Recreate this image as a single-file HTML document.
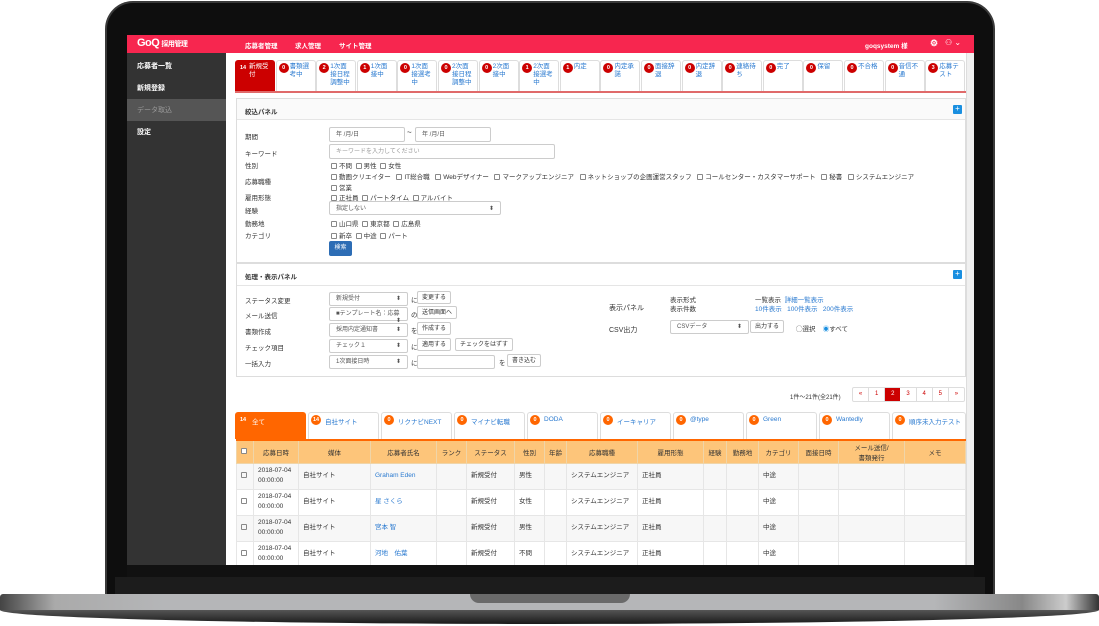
<!DOCTYPE html>
<html><head><meta charset="utf-8"><style>
*{margin:0;padding:0;box-sizing:border-box}
body{width:1099px;height:626px;background:#fff;position:relative;overflow:hidden;font-family:"Liberation Sans","Noto Sans CJK JP",sans-serif;font-size:7px;color:#333}
.a{position:absolute}
.lid{left:105px;top:1px;width:890px;height:600px;background:#0e0e0e;border-radius:28px 28px 0 0;border:2px solid #3a3a3a;border-bottom:none}
.scr{left:127px;top:35px;width:847px;height:530px;background:#fff;overflow:hidden}
.hdr{left:0;top:0;width:847px;height:18px;background:#f7264f;color:#fff;font-weight:bold}
.side{left:0;top:18px;width:99px;height:512px;background:#333;color:#fff;font-weight:bold}
.side div{position:absolute;left:10px;font-size:7px}
.tab{top:25px;height:32px;width:40px;border:1px solid #ddd;border-bottom:none;border-radius:3px 3px 0 0;background:#fff;color:#2a7ad0;font-size:6.5px;line-height:8px;padding:2px 2px 0 13px}
.tab b{position:absolute;left:2px;top:2px;width:10px;height:10px;border-radius:50%;background:#c00;color:#fff;font-size:5.5px;text-align:center;line-height:10px}
.inp{border:1px solid #ccc;border-radius:2px;background:#fff;height:12px;font-size:6px;color:#555;padding:2px 6px;line-height:7px}
.btn{border:1px solid #ccc;border-radius:2px;background:#fff;height:13px;font-size:6px;padding:3px 4px;line-height:7px;color:#333}
.lbl{font-size:6.5px}
.cb{display:inline-block;width:6px;height:6px;border:1px solid #888;border-radius:1px;margin:0 2px 0 0;vertical-align:-1px}
.opt{font-size:6.5px;white-space:nowrap}
.stab{top:377px;height:27px;width:71px;border:1px solid #ddd;border-bottom:none;border-radius:3px 3px 0 0;background:#fff;color:#2a7ad0;font-size:6.5px;padding:3px 0 0 16px}
.stab b{position:absolute;left:2px;top:2px;width:10px;height:10px;border-radius:50%;background:#f60;color:#fff;font-size:5.5px;text-align:center;line-height:10px}
table{position:absolute;left:109px;top:404px;width:730px;border-collapse:collapse;font-size:6.5px}
th{background:#fdc57a;height:23px;font-weight:normal;border:1px solid #f0d5a8;border-top:2px solid #f60;text-align:center}
td{height:26px;border:1px solid #e6e6e6;padding:0 4px;line-height:10px}
tr:nth-child(even) td{background:#f7f7f7}
.lk{color:#2a7ad0}
</style></head><body>
<div class="a lid"></div>
<div class="a" style="left:127px;top:565px;width:847px;height:12px;background:#111"></div>
<div class="a" style="left:115px;top:577px;width:870px;height:17px;background:#1c1c1c"></div>
<div class="a" style="left:0;top:594px;width:1099px;height:16px;background:linear-gradient(90deg,#444 0%,#aaa 5%,#b5b6b8 15%,#b5b6b8 85%,#888 93%,#ccc 97%,#333 100%);border-radius:3px 3px 0 0"></div>
<div class="a" style="left:470px;top:594px;width:160px;height:9px;background:#6a6a6a;border-radius:0 0 10px 10px"></div>
<div class="a" style="left:0;top:610px;width:1099px;height:14px;background:linear-gradient(#555,#1a1a1a);border-radius:0 0 50% 50%/0 0 100% 100%"></div>

<div class="a scr">
 <div class="a hdr">
  <div class="a" style="left:10px;top:2px;font-size:11px;font-weight:bold;letter-spacing:-0.5px">GoQ<span style="font-size:7px;margin-left:2px">採用管理</span></div>
  <div class="a" style="left:118px;top:5px;font-size:6.5px">応募者管理</div>
  <div class="a" style="left:168px;top:5px;font-size:6.5px">求人管理</div>
  <div class="a" style="left:212px;top:5px;font-size:6.5px">サイト管理</div>
  <div class="a" style="left:738px;top:5px;font-size:6.5px">goqsystem 様</div>
  <div class="a" style="left:803px;top:3px;font-size:9px">⚙</div>
  <div class="a" style="left:818px;top:3px;font-size:8px;font-weight:normal">⚇ ⌄</div>
 </div>
 <div class="a side">
  <div style="top:8px">応募者一覧</div>
  <div style="top:30px">新規登録</div>
  <div style="left:0;top:46px;width:99px;height:22px;background:#555"></div>
  <div style="top:52px;color:#999;font-weight:normal">データ取込</div>
  <div style="top:74px">設定</div>
 </div>
 <div class="a" style="left:839px;top:18px;width:8px;height:512px;background:#f0f0f0;border-left:1px solid #ddd"></div>

 <!-- status tabs -->
 <div class="a tab" style="left:108px;background:#c00;color:#fff;height:33px;border-color:#c00"><b style="background:none">14</b>新規受付</div>
 <div class="a tab" style="left:148.6px"><b>0</b>書類選考中</div>
 <div class="a tab" style="left:189.2px"><b>2</b>1次面接日程調整中</div>
 <div class="a tab" style="left:229.8px"><b>1</b>1次面接中</div>
 <div class="a tab" style="left:270.4px"><b>0</b>1次面接選考中</div>
 <div class="a tab" style="left:311px"><b>0</b>2次面接日程調整中</div>
 <div class="a tab" style="left:351.6px"><b>0</b>2次面接中</div>
 <div class="a tab" style="left:392.2px"><b>1</b>2次面接選考中</div>
 <div class="a tab" style="left:432.8px"><b>1</b>内定</div>
 <div class="a tab" style="left:473.4px"><b>0</b>内定承諾</div>
 <div class="a tab" style="left:514px"><b>0</b>面接辞退</div>
 <div class="a tab" style="left:554.6px"><b>0</b>内定辞退</div>
 <div class="a tab" style="left:595.2px"><b>0</b>連絡待ち</div>
 <div class="a tab" style="left:635.8px"><b>0</b>完了</div>
 <div class="a tab" style="left:676.4px"><b>0</b>保留</div>
 <div class="a tab" style="left:717px"><b>0</b>不合格</div>
 <div class="a tab" style="left:757.6px"><b>0</b>音信不通</div>
 <div class="a tab" style="left:798.2px"><b>3</b>応募テスト</div>
 <div class="a" style="left:108px;top:56px;width:731px;height:2px;background:#e06a6a"></div>

 <!-- panel1 -->
 <div class="a" style="left:109px;top:63px;width:730px;height:165px;border:1px solid #ddd">
  <div class="a" style="left:0;top:0;width:728px;height:21px;border-bottom:1px solid #e5e5e5;background:#fafafa"></div>
  <div class="a lbl" style="left:8px;top:7px;font-weight:bold">絞込パネル</div>
  <div class="a" style="left:716px;top:6px;width:9px;height:9px;background:#1a8fe0;border-radius:1px;color:#fff;font-size:8px;line-height:8px;text-align:center">+</div>
  <div class="a lbl" style="left:8px;top:32px">期間</div>
  <div class="a inp" style="left:92px;top:28px;width:76px;height:15px;padding-top:4px">年 /月/日</div>
  <div class="a" style="left:170px;top:29px;font-size:8px">~</div>
  <div class="a inp" style="left:178px;top:28px;width:76px;height:15px;padding-top:4px">年 /月/日</div>
  <div class="a lbl" style="left:8px;top:49px">キーワード</div>
  <div class="a inp" style="left:92px;top:45px;width:226px;height:15px;padding-top:4px;color:#999">キーワードを入力してください</div>
  <div class="a lbl" style="left:8px;top:61px">性別</div>
  <div class="a opt" style="left:94px;top:61px"><i class="cb"></i>不問 &nbsp;<i class="cb"></i>男性 &nbsp;<i class="cb"></i>女性</div>
  <div class="a lbl" style="left:8px;top:77px">応募職種</div>
  <div class="a opt" style="left:94px;top:72px;word-spacing:1px"><i class="cb"></i>動画クリエイター &nbsp;<i class="cb"></i>IT総合職 &nbsp;<i class="cb"></i>Webデザイナー &nbsp;<i class="cb"></i>マークアップエンジニア &nbsp;<i class="cb"></i>ネットショップの企画運営スタッフ &nbsp;<i class="cb"></i>コールセンター・カスタマーサポート &nbsp;<i class="cb"></i>秘書 &nbsp;<i class="cb"></i>システムエンジニア</div>
  <div class="a opt" style="left:94px;top:83px"><i class="cb"></i>営業</div>
  <div class="a lbl" style="left:8px;top:93px">雇用形態</div>
  <div class="a opt" style="left:94px;top:93px"><i class="cb"></i>正社員 &nbsp;<i class="cb"></i>パートタイム &nbsp;<i class="cb"></i>アルバイト</div>
  <div class="a lbl" style="left:8px;top:106px">経験</div>
  <div class="a inp" style="left:92px;top:102px;width:172px;height:14px;padding-top:4px">指定しない<span style="float:right">⬍</span></div>
  <div class="a lbl" style="left:8px;top:119px">勤務地</div>
  <div class="a opt" style="left:94px;top:119px"><i class="cb"></i>山口県 &nbsp;<i class="cb"></i>東京都 &nbsp;<i class="cb"></i>広島県</div>
  <div class="a lbl" style="left:8px;top:131px">カテゴリ</div>
  <div class="a opt" style="left:94px;top:131px"><i class="cb"></i>新卒 &nbsp;<i class="cb"></i>中途 &nbsp;<i class="cb"></i>パート</div>
  <div class="a" style="left:92px;top:142px;width:23px;height:15px;background:#2d6db5;border-radius:2px;color:#fff;font-size:6px;text-align:center;line-height:15px">検索</div>
 </div>

 <!-- panel2 -->
 <div class="a" style="left:109px;top:228px;width:730px;height:114px;border:1px solid #ddd">
  <div class="a" style="left:0;top:0;width:728px;height:22px;border-bottom:1px solid #e5e5e5"></div>
  <div class="a lbl" style="left:8px;top:7px;font-weight:bold">処理・表示パネル</div>
  <div class="a" style="left:716px;top:6px;width:9px;height:9px;background:#1a8fe0;border-radius:1px;color:#fff;font-size:8px;line-height:8px;text-align:center">+</div>
  <div class="a lbl" style="left:8px;top:31px">ステータス変更</div>
  <div class="a inp" style="left:92px;top:28px;width:79px;height:14px;padding-top:3px">新規受付<span style="float:right">⬍</span></div>
  <div class="a lbl" style="left:174px;top:30px">に</div>
  <div class="a btn" style="left:180px;top:27px">変更する</div>
  <div class="a lbl" style="left:8px;top:46px">メール送信</div>
  <div class="a inp" style="left:92px;top:43px;width:79px;height:14px;padding-top:3px">■テンプレート名：応募<span style="float:right">⬍</span></div>
  <div class="a lbl" style="left:174px;top:45px">の</div>
  <div class="a btn" style="left:180px;top:42px">送信画面へ</div>
  <div class="a lbl" style="left:8px;top:62px">書類作成</div>
  <div class="a inp" style="left:92px;top:59px;width:79px;height:14px;padding-top:3px">採用内定通知書<span style="float:right">⬍</span></div>
  <div class="a lbl" style="left:174px;top:61px">を</div>
  <div class="a btn" style="left:180px;top:58px">作成する</div>
  <div class="a lbl" style="left:8px;top:78px">チェック項目</div>
  <div class="a inp" style="left:92px;top:75px;width:79px;height:14px;padding-top:3px">チェック１<span style="float:right">⬍</span></div>
  <div class="a lbl" style="left:174px;top:77px">に</div>
  <div class="a btn" style="left:180px;top:74px">適用する</div>
  <div class="a btn" style="left:218px;top:74px">チェックをはずす</div>
  <div class="a lbl" style="left:8px;top:94px">一括入力</div>
  <div class="a inp" style="left:92px;top:91px;width:79px;height:14px;padding-top:3px">1次面接日時<span style="float:right">⬍</span></div>
  <div class="a lbl" style="left:174px;top:93px">に</div>
  <div class="a inp" style="left:180px;top:91px;width:78px;height:14px"></div>
  <div class="a lbl" style="left:262px;top:93px">を</div>
  <div class="a btn" style="left:270px;top:90px">書き込む</div>
  <div class="a lbl" style="left:372px;top:39px;font-size:7px">表示パネル</div>
  <div class="a lbl" style="left:433px;top:30px">表示形式</div>
  <div class="a lbl" style="left:433px;top:39px">表示件数</div>
  <div class="a lbl" style="left:518px;top:30px">一覧表示 &nbsp;<span class="lk">詳細一覧表示</span></div>
  <div class="a lbl lk" style="left:518px;top:39px">10件表示 &nbsp;&nbsp;100件表示 &nbsp;&nbsp;200件表示</div>
  <div class="a lbl" style="left:372px;top:61px;font-size:7px">CSV出力</div>
  <div class="a inp" style="left:433px;top:56px;width:79px;height:14px;padding-top:3px">CSVデータ<span style="float:right">⬍</span></div>
  <div class="a btn" style="left:513px;top:56px">出力する</div>
  <div class="a lbl" style="left:559px;top:59px">◯選択 &nbsp;&nbsp;&nbsp;<span style="color:#1a8fe0">◉</span>すべて</div>
 </div>

 <!-- pagination -->
 <div class="a lbl" style="left:663px;top:357px;font-size:6px">1件〜21件(全21件)</div>
 <div class="a" style="left:725px;top:352px;width:113px;height:15px;border:1px solid #ddd;border-radius:2px;display:flex;font-size:6px;color:#c00">
  <div style="flex:1;text-align:center;line-height:13px;border-right:1px solid #ddd">«</div>
  <div style="flex:1;text-align:center;line-height:13px;border-right:1px solid #ddd">1</div>
  <div style="flex:1;text-align:center;line-height:13px;background:#c00;color:#fff">2</div>
  <div style="flex:1;text-align:center;line-height:13px;border-right:1px solid #ddd">3</div>
  <div style="flex:1;text-align:center;line-height:13px;border-right:1px solid #ddd">4</div>
  <div style="flex:1;text-align:center;line-height:13px;border-right:1px solid #ddd">5</div>
  <div style="flex:1;text-align:center;line-height:13px">»</div>
 </div>

 <!-- source tabs -->
 <div class="a stab" style="left:108px;background:#f60;color:#fff;border-color:#f60"><b style="background:none">14</b>全て</div>
 <div class="a stab" style="left:181px"><b>14</b>自社サイト</div>
 <div class="a stab" style="left:254px"><b>0</b>リクナビNEXT</div>
 <div class="a stab" style="left:327px"><b>0</b>マイナビ転職</div>
 <div class="a stab" style="left:400px"><b>0</b>DODA</div>
 <div class="a stab" style="left:473px"><b>0</b>イーキャリア</div>
 <div class="a stab" style="left:546px"><b>0</b>@type</div>
 <div class="a stab" style="left:619px"><b>0</b>Green</div>
 <div class="a stab" style="left:692px"><b>0</b>Wantedly</div>
 <div class="a stab" style="left:765px;width:74px"><b>0</b>順序未入力テスト</div>

 <table>
  <tr><th style="width:17px"><i class="cb" style="background:#fff"></i></th><th style="width:45px">応募日時</th><th style="width:72px">媒体</th><th style="width:66px">応募者氏名</th><th style="width:30px">ランク</th><th style="width:48px">ステータス</th><th style="width:30px">性別</th><th style="width:22px">年齢</th><th style="width:71px">応募職種</th><th style="width:66px">雇用形態</th><th style="width:23px">経験</th><th style="width:32px">勤務地</th><th style="width:40px">カテゴリ</th><th style="width:40px">面接日時</th><th style="width:66px">メール送信/<br>書類発行</th><th>メモ</th></tr>
  <tr><td><i class="cb"></i></td><td>2018-07-04<br>00:00:00</td><td>自社サイト</td><td class="lk">Graham Eden</td><td></td><td>新規受付</td><td>男性</td><td></td><td>システムエンジニア</td><td>正社員</td><td></td><td></td><td>中途</td><td></td><td></td><td></td></tr>
  <tr><td><i class="cb"></i></td><td>2018-07-04<br>00:00:00</td><td>自社サイト</td><td class="lk">星 さくら</td><td></td><td>新規受付</td><td>女性</td><td></td><td>システムエンジニア</td><td>正社員</td><td></td><td></td><td>中途</td><td></td><td></td><td></td></tr>
  <tr><td><i class="cb"></i></td><td>2018-07-04<br>00:00:00</td><td>自社サイト</td><td class="lk">宮本 智</td><td></td><td>新規受付</td><td>男性</td><td></td><td>システムエンジニア</td><td>正社員</td><td></td><td></td><td>中途</td><td></td><td></td><td></td></tr>
  <tr><td><i class="cb"></i></td><td>2018-07-04<br>00:00:00</td><td>自社サイト</td><td class="lk">河地　佑葉</td><td></td><td>新規受付</td><td>不問</td><td></td><td>システムエンジニア</td><td>正社員</td><td></td><td></td><td>中途</td><td></td><td></td><td></td></tr>
 </table>
</div>
</body></html>
